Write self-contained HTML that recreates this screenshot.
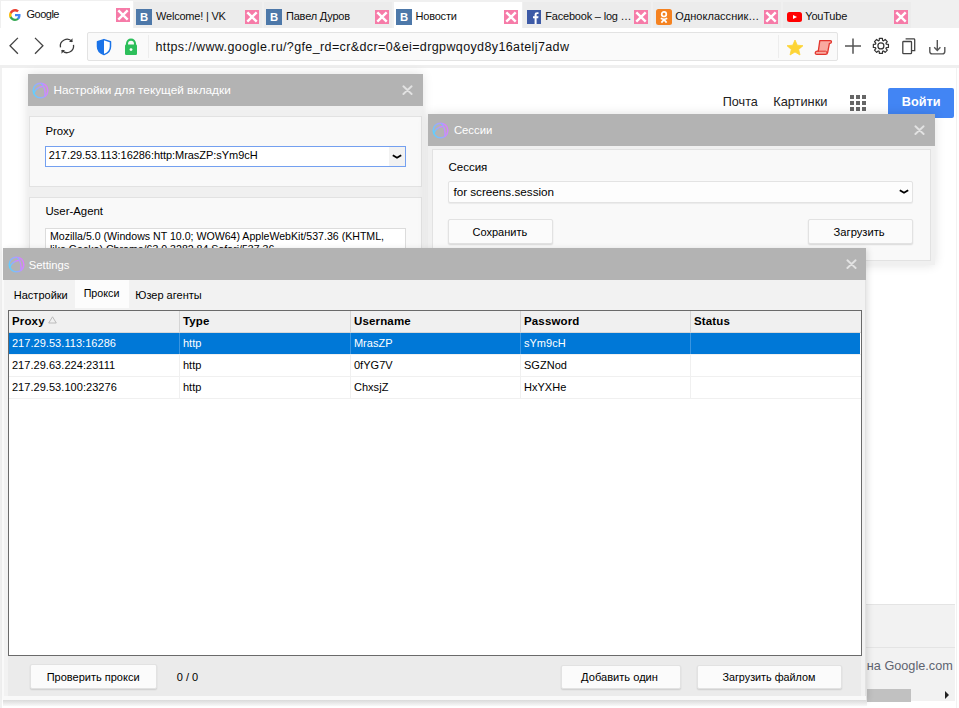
<!DOCTYPE html><html><head><meta charset="utf-8"><style>
*{box-sizing:border-box;margin:0;padding:0}
html,body{width:959px;height:708px;overflow:hidden;background:#fff;font-family:"Liberation Sans",sans-serif;position:relative}
.a{position:absolute}
svg{display:block}
.t{white-space:nowrap;line-height:1}
.tab{top:3px;height:26px}
.fav{top:9px;width:16px;height:16px}
.ttl{top:12px;font-size:12px;color:#1a1a1a}
.cls{top:10px;width:14px;height:14px}
.tbar{background:#b3b3b3;color:#fff;font-size:13px}
.panel{background:#f9f9f9;border:1px solid #e2e2e2}
.lbl{font-size:12.5px;color:#111}
.btn{background:#fbfbfb;border:1px solid #e2e2e2;border-radius:2px;box-shadow:0 1px 1.5px rgba(0,0,0,.13);font-size:12px;color:#111;text-align:center}
.cell{font-size:11px;color:#000}
</style></head><body>
<div class="a" style="left:0;top:0;width:959px;height:28px;background:#f0f0f0"></div>
<div class="a" style="left:1px;top:1px;width:132px;height:27px;background:#fff"></div>
<svg class="a" style="left:9px;top:9px" width="12" height="12" viewBox="0 0 16 16"><path d="M15.4 8.2c0-.6-.1-1.1-.2-1.6H8v3h4.2c-.2 1-.7 1.8-1.5 2.3v1.9h2.5c1.4-1.3 2.2-3.3 2.2-5.6z" fill="#4285f4"/><path d="M8 16c2.1 0 3.9-.7 5.2-1.9l-2.5-1.9c-.7.5-1.6.8-2.7.8-2 0-3.8-1.4-4.4-3.3H1v2C2.3 14.3 4.9 16 8 16z" fill="#34a853"/><path d="M3.6 9.7c-.2-.5-.3-1.1-.3-1.7s.1-1.2.3-1.7v-2H1C.4 5.4 0 6.7 0 8s.4 2.6 1 3.7l2.6-2z" fill="#fbbc05"/><path d="M8 3.2c1.2 0 2.2.4 3 1.2l2.3-2.3C11.9.8 10.1 0 8 0 4.9 0 2.3 1.7 1 4.3l2.6 2C4.2 4.5 6 3.2 8 3.2z" fill="#ea4335"/></svg>
<div class="a t" style="left:26.5px;top:9.29px;font-size:11px;color:#111;letter-spacing:-.5px">Google</div>
<div class="a" style="left:116px;top:8px"><svg width="14" height="14"><rect width="14" height="14" fill="#f67ba8"/><path d="M2.3 2.3L11.7 11.7M11.7 2.3L2.3 11.7" stroke="#fff" stroke-width="2.4"/></svg></div>
<div class="a" style="left:134px;top:2px;width:128px;height:26px;background:#ececec"></div>
<svg class="a" style="left:136px;top:9px" width="16" height="16"><rect width="16" height="16" fill="#4d78a9"/><text x="8.2" y="11.9" font-family="Liberation Sans" font-weight="bold" font-size="11.3" fill="#fff" text-anchor="middle">B</text></svg>
<div class="a t" style="left:156px;top:11.09px;font-size:11px;color:#111;letter-spacing:-.2px">Welcome! | VK</div>
<div class="a" style="left:244.5px;top:10px"><svg width="14" height="14"><rect width="14" height="14" fill="#f67ba8"/><path d="M2.3 2.3L11.7 11.7M11.7 2.3L2.3 11.7" stroke="#fff" stroke-width="2.4"/></svg></div>
<div class="a" style="left:264px;top:2px;width:128px;height:26px;background:#ececec"></div>
<svg class="a" style="left:266px;top:9px" width="16" height="16"><rect width="16" height="16" fill="#4d78a9"/><text x="8.2" y="11.9" font-family="Liberation Sans" font-weight="bold" font-size="11.3" fill="#fff" text-anchor="middle">B</text></svg>
<div class="a t" style="left:286px;top:11.09px;font-size:11px;color:#111;letter-spacing:-.2px">Павел Дуров</div>
<div class="a" style="left:374.5px;top:10px"><svg width="14" height="14"><rect width="14" height="14" fill="#f67ba8"/><path d="M2.3 2.3L11.7 11.7M11.7 2.3L2.3 11.7" stroke="#fff" stroke-width="2.4"/></svg></div>
<div class="a" style="left:393.5px;top:2px;width:128px;height:26px;background:#fff"></div>
<svg class="a" style="left:395.5px;top:9px" width="16" height="16"><rect width="16" height="16" fill="#4d78a9"/><text x="8.2" y="11.9" font-family="Liberation Sans" font-weight="bold" font-size="11.3" fill="#fff" text-anchor="middle">B</text></svg>
<div class="a t" style="left:415.5px;top:11.09px;font-size:11px;color:#111;letter-spacing:-.2px">Новости</div>
<div class="a" style="left:504.0px;top:10px"><svg width="14" height="14"><rect width="14" height="14" fill="#f67ba8"/><path d="M2.3 2.3L11.7 11.7M11.7 2.3L2.3 11.7" stroke="#fff" stroke-width="2.4"/></svg></div>
<div class="a" style="left:523.3px;top:2px;width:128px;height:26px;background:#ececec"></div>
<svg class="a" style="left:527.0px;top:10px" width="14" height="14"><rect width="14" height="14" fill="#3d5aa6"/><path d="M7.6 14V8.2H6V6.2H7.6V4.7C7.6 3 8.6 2.2 10.1 2.2C10.8 2.2 11.3 2.3 11.5 2.3V4H10.5C9.7 4 9.6 4.4 9.6 4.9V6.2H11.5L11.2 8.2H9.6V14Z" fill="#fff"/></svg>
<div class="a t" style="left:545.3px;top:11.09px;font-size:11px;color:#111;letter-spacing:-.2px">Facebook – log …</div>
<div class="a" style="left:633.8px;top:10px"><svg width="14" height="14"><rect width="14" height="14" fill="#f67ba8"/><path d="M2.3 2.3L11.7 11.7M11.7 2.3L2.3 11.7" stroke="#fff" stroke-width="2.4"/></svg></div>
<div class="a" style="left:653.3px;top:2px;width:128px;height:26px;background:#ececec"></div>
<svg class="a" style="left:656.3px;top:9px" width="16" height="16"><rect width="16" height="16" rx="2.5" fill="#f58220"/><circle cx="8" cy="5.2" r="2.3" fill="none" stroke="#fff" stroke-width="1.7"/><path d="M4.8 9.3q3.2 2 6.4 0M8 10.6l-2.6 3M8 10.6l2.6 3" fill="none" stroke="#fff" stroke-width="1.7"/></svg>
<div class="a t" style="left:675.3px;top:11.09px;font-size:11px;color:#111;letter-spacing:.05px">Одноклассник…</div>
<div class="a" style="left:763.8px;top:10px"><svg width="14" height="14"><rect width="14" height="14" fill="#f67ba8"/><path d="M2.3 2.3L11.7 11.7M11.7 2.3L2.3 11.7" stroke="#fff" stroke-width="2.4"/></svg></div>
<div class="a" style="left:783.3px;top:2px;width:128px;height:26px;background:#ececec"></div>
<svg class="a" style="left:787.3px;top:12px" width="15" height="10"><rect width="15" height="10" rx="2.5" fill="#f00"/><path d="M6 3l4 2-4 2z" fill="#fff"/></svg>
<div class="a t" style="left:805.3px;top:11.09px;font-size:11px;color:#111;letter-spacing:-.2px">YouTube</div>
<div class="a" style="left:893.8px;top:10px"><svg width="14" height="14"><rect width="14" height="14" fill="#f67ba8"/><path d="M2.3 2.3L11.7 11.7M11.7 2.3L2.3 11.7" stroke="#fff" stroke-width="2.4"/></svg></div>
<div class="a" style="left:0;top:28px;width:959px;height:37px;background:#fff"></div>
<div class="a" style="left:0;top:65px;width:959px;height:3px;background:#efefef"></div>
<svg class="a" style="left:0;top:30px" width="80" height="30"><path d="M17.9 7.9L10 15.8L17.9 23.75M35 7.9L42.9 15.8L35 23.75" fill="none" stroke="#444" stroke-width="1.3"/><g transform="translate(56,6)"><path d="M4.5 11.3A6.6 6.6 0 0 1 16.1 5.8M17.5 8.9A6.6 6.6 0 0 1 5.9 14.2" fill="none" stroke="#3a3a3a" stroke-width="1.3"/><path d="M13 5.9H16.5V2.3Z" fill="#3a3a3a"/><path d="M9 14.1H5.5V17.7Z" fill="#3a3a3a"/></g></svg>
<div class="a" style="left:87px;top:32px;width:751px;height:29px;background:#fafafa;border:1px solid #e3e3e3;border-radius:2px"></div>
<div class="a" style="left:148px;top:35px;width:1px;height:23px;background:#ededed"></div>
<div class="a" style="left:778px;top:35px;width:1px;height:23px;background:#ededed"></div>
<svg class="a" style="left:90px;top:30px" width="60" height="30"><path d="M14 9.6L20.5 11.8V16.5C20.5 20.3 17.8 23.3 14 24.6C10.2 23.3 7.5 20.3 7.5 16.5V11.8Z" fill="#fff" stroke="#1a73e8" stroke-width="1.5" stroke-linejoin="round"/><path d="M14 9.6L7.5 11.8V16.5C7.5 20.3 10.2 23.3 14 24.6Z" fill="#1a73e8"/><path d="M37 15V13.6A4 4 0 0 1 45 13.6V15" fill="none" stroke="#2dbf5b" stroke-width="2.1"/><rect x="35" y="14.6" width="12" height="10.3" rx="1.2" fill="#2dbf5b"/><circle cx="41" cy="19.6" r="1.4" fill="#fff"/></svg>
<div class="a t" style="left:155.5px;top:41.4px;font-size:12.5px;letter-spacing:.38px;color:#111">https://www.google.ru/?gfe_rd=cr&amp;dcr=0&amp;ei=drgpwqoyd8y16atelj7adw</div>
<svg class="a" style="left:780px;top:30px" width="179" height="32"><path d="M15 10L17.3 15.2L23 15.7L18.7 19.4L20 25L15 22L10 25L11.3 19.4L7 15.7L12.7 15.2Z" fill="#fdd435" stroke="#fdd435" stroke-width=".8" stroke-linejoin="round"/><path d="M39.8 10.6H50.2Q51.6 10.6 51.4 12.1Q51.2 13.3 50 13.3H49.4L47.7 22.3Q47.3 24.3 45.5 24.3H36.8Q35 24.3 35.3 22.7Q35.6 21.2 37.3 21.2H38.3Z" fill="#f9a99f" stroke="#e2352d" stroke-width="1.3" stroke-linejoin="round"/><path d="M37.3 21.2H45.6Q47 21.2 46.7 22.8" fill="none" stroke="#e2352d" stroke-width="1"/><path d="M73 8.4V23.7M65 15.9H81" stroke="#555" stroke-width="1.5"/><path d="M98.72 10.63 L99.22 10.45 L99.37 8.35 L102.43 8.35 L102.58 10.45 L103.08 10.63 L103.56 10.86 L105.15 9.48 L107.32 11.65 L105.94 13.24 L106.17 13.72 L106.35 14.22 L108.45 14.37 L108.45 17.43 L106.35 17.58 L106.17 18.08 L105.94 18.56 L107.32 20.15 L105.15 22.32 L103.56 20.94 L103.08 21.17 L102.58 21.35 L102.43 23.45 L99.37 23.45 L99.22 21.35 L98.72 21.17 L98.24 20.94 L96.65 22.32 L94.48 20.15 L95.86 18.56 L95.63 18.08 L95.45 17.58 L93.35 17.43 L93.35 14.37 L95.45 14.22 L95.63 13.72 L95.86 13.24 L94.48 11.65 L96.65 9.48 L98.24 10.86Z" fill="none" stroke="#333" stroke-width="1.2" stroke-linejoin="round"/><circle cx="100.9" cy="15.9" r="3" fill="none" stroke="#333" stroke-width="1.2"/><rect x="122.8" y="11.5" width="8.7" height="12.2" rx="0.8" fill="none" stroke="#444" stroke-width="1.3"/><path d="M125.6 8.9H133.9Q134.7 8.9 134.7 9.7V20.6H132" fill="none" stroke="#444" stroke-width="1.3"/><path d="M149.8 17.1V21.5Q149.8 23.9 152.2 23.9H162.4Q164.8 23.9 164.8 21.5V17.1" fill="none" stroke="#555" stroke-width="1.4"/><path d="M157.3 10V20.2M154.2 17.3L157.3 20.4L160.4 17.3" fill="none" stroke="#555" stroke-width="1.4"/></svg>
<div class="a" style="left:0;top:68px;width:2px;height:640px;background:#f1f1f1"></div>
<div class="a t" style="left:722.8px;top:95.93px;font-size:12.6px;color:#222">Почта</div>
<div class="a t" style="left:773.2px;top:95.76px;font-size:12.8px;color:#222">Картинки</div>
<svg class="a" style="left:850px;top:95px" width="16" height="16"><rect x="0" y="0" width="4" height="4" fill="#666"/><rect x="6" y="0" width="4" height="4" fill="#666"/><rect x="12" y="0" width="4" height="4" fill="#666"/><rect x="0" y="6" width="4" height="4" fill="#666"/><rect x="6" y="6" width="4" height="4" fill="#666"/><rect x="12" y="6" width="4" height="4" fill="#666"/><rect x="0" y="12" width="4" height="4" fill="#666"/><rect x="6" y="12" width="4" height="4" fill="#666"/><rect x="12" y="12" width="4" height="4" fill="#666"/></svg>
<div class="a" style="left:888px;top:88px;width:66px;height:30px;background:#4285f4;border-radius:2px"></div>
<div class="a t" style="left:901.8px;top:95.65px;font-size:12.7px;color:#fff;font-weight:bold">Войти</div>
<div class="a" style="left:956px;top:68px;width:1px;height:640px;background:#f2f2f2"></div>
<div class="a" style="left:866px;top:604px;width:89px;height:97px;background:#f2f2f2;border-top:1px solid #e4e4e4"></div>
<div class="a" style="left:866px;top:647px;width:89px;height:1px;background:#e4e4e4"></div>
<div class="a t" style="left:866.8px;top:660.05px;font-size:12.7px;color:#5e6470">на Google.com</div>
<div class="a" style="left:867px;top:689px;width:44px;height:13px;background:#c1c1c1"></div>
<svg class="a" style="left:943px;top:690px" width="8" height="10"><path d="M2 1L6 5L2 9Z" fill="#222"/></svg>
<div class="a" style="left:28px;top:74px;width:395px;height:180px;background:#f0f0f0;box-shadow:0 0 10px rgba(0,0,0,.12)"></div>
<div class="a tbar" style="left:28px;top:74px;width:395px;height:32px"></div>
<div class="a" style="left:32px;top:81.5px"><svg width="17" height="17" viewBox="0 0 17 17"><defs><linearGradient id="g1" x1="0" y1="0.7" x2="1" y2="0.3"><stop offset="0" stop-color="#5fd0ff"/><stop offset="1" stop-color="#e07bff"/></linearGradient></defs><g fill="none" stroke="url(#g1)" stroke-width="1.5"><circle cx="8.5" cy="8.5" r="7.3"/><path d="M1.8 11Q4 5.5 11 4.2"/><path d="M9.5 1.4Q14.2 7 12.8 15"/></g></svg></div>
<div class="a t" style="left:53.5px;top:85.01px;font-size:11.8px;color:#fff">Настройки для текущей вкладки</div>
<div class="a" style="left:401.5px;top:85px"><svg width="11" height="10"><path d="M1.4 1.3L9.6 9M9.6 1.3L1.4 9" stroke="#e2e2e2" stroke-width="1.9" stroke-linecap="round"/></svg></div>
<div class="a panel" style="left:29px;top:116px;width:393px;height:71px"></div>
<div class="a t" style="left:45.4px;top:126.15px;font-size:11.4px;color:#000">Proxy</div>
<div class="a" style="left:45px;top:146px;width:361px;height:21px;background:#fff;border:1px solid #74a0f0"></div>
<div class="a" style="left:388.5px;top:147px;width:16.5px;height:19px;background:#f2f2f2"></div>
<div class="a" style="left:392px;top:153.5px"><svg width="10" height="5"><path d="M0.8 1.2L5 3.7L9.2 1.2" fill="none" stroke="#000" stroke-width="1.9"/></svg></div>
<div class="a t" style="left:48.7px;top:150.29px;font-size:11px;color:#000;letter-spacing:-.05px">217.29.53.113:16286:http:MrasZP:sYm9cH</div>
<div class="a panel" style="left:29px;top:197px;width:393px;height:70px"></div>
<div class="a t" style="left:45.4px;top:205.65px;font-size:11.4px;color:#000">User-Agent</div>
<div class="a" style="left:45px;top:228px;width:361px;height:30px;background:#fff;border:1px solid #dcdcdc"></div>
<div class="a" style="left:50px;top:229.5px;width:352px;font-size:10.6px;line-height:13px;color:#000;white-space:nowrap">Mozilla/5.0 (Windows NT 10.0; WOW64) AppleWebKit/537.36 (KHTML,<br>like Gecko) Chrome/63.0.3282.84 Safari/537.36</div>
<div class="a" style="left:428px;top:114px;width:507px;height:151px;background:#f0f0f0;box-shadow:0 0 10px rgba(0,0,0,.12)"></div>
<div class="a tbar" style="left:428px;top:114px;width:507px;height:32px"></div>
<div class="a" style="left:432px;top:121.5px"><svg width="17" height="17" viewBox="0 0 17 17"><defs><linearGradient id="g2" x1="0" y1="0.7" x2="1" y2="0.3"><stop offset="0" stop-color="#5fd0ff"/><stop offset="1" stop-color="#e07bff"/></linearGradient></defs><g fill="none" stroke="url(#g2)" stroke-width="1.5"><circle cx="8.5" cy="8.5" r="7.3"/><path d="M1.8 11Q4 5.5 11 4.2"/><path d="M9.5 1.4Q14.2 7 12.8 15"/></g></svg></div>
<div class="a t" style="left:453.9px;top:125.13px;font-size:11.3px;color:#fff">Сессии</div>
<div class="a" style="left:913.5px;top:124.5px"><svg width="11" height="10"><path d="M1.4 1.3L9.6 9M9.6 1.3L1.4 9" stroke="#e2e2e2" stroke-width="1.9" stroke-linecap="round"/></svg></div>
<div class="a panel" style="left:432px;top:149px;width:499px;height:112px"></div>
<div class="a t" style="left:448.5px;top:161.87px;font-size:11.5px;color:#000">Сессия</div>
<div class="a" style="left:448px;top:181px;width:465px;height:22px;background:#fdfdfd;border:1px solid #e3e3e3;border-radius:2px;box-shadow:0 1px 1px rgba(0,0,0,.06)"></div>
<div class="a t" style="left:453.4px;top:185.70px;font-size:11.7px;color:#000">for screens.session</div>
<div class="a" style="left:899px;top:189px"><svg width="10" height="5"><path d="M0.8 1.2L5 3.7L9.2 1.2" fill="none" stroke="#000" stroke-width="1.9"/></svg></div>
<div class="a btn" style="left:448px;top:219px;width:105px;height:24.5px"></div>
<div class="a t" style="left:472.5px;top:226.99px;font-size:11px;color:#000">Сохранить</div>
<div class="a btn" style="left:808px;top:219px;width:105px;height:24.5px"></div>
<div class="a t" style="left:833.6px;top:226.62px;font-size:11.2px;color:#000">Загрузить</div>
<div class="a" style="left:3px;top:248px;width:863px;height:452px;background:#f9f9f9;box-shadow:2px 1px 6px rgba(0,0,0,.12)"></div>
<div class="a" style="left:4px;top:280px;width:862px;height:416px;background:#f2f2f2;border-right:1px solid #e2e2e2"></div>
<div class="a" style="left:8px;top:656px;width:853px;height:40px;background:#ebebeb"></div>
<div class="a" style="left:3px;top:700px;width:864px;height:6px;background:linear-gradient(#dadada,#ececec 60%,#f8f8f8)"></div>
<div class="a tbar" style="left:3px;top:248px;width:863px;height:32px"></div>
<div class="a" style="left:7.5px;top:255.5px"><svg width="17" height="17" viewBox="0 0 17 17"><defs><linearGradient id="g3" x1="0" y1="0.7" x2="1" y2="0.3"><stop offset="0" stop-color="#5fd0ff"/><stop offset="1" stop-color="#e07bff"/></linearGradient></defs><g fill="none" stroke="url(#g3)" stroke-width="1.5"><circle cx="8.5" cy="8.5" r="7.3"/><path d="M1.8 11Q4 5.5 11 4.2"/><path d="M9.5 1.4Q14.2 7 12.8 15"/></g></svg></div>
<div class="a t" style="left:28.7px;top:259.93px;font-size:11.3px;color:#fff">Settings</div>
<div class="a" style="left:845.5px;top:258.5px"><svg width="11" height="10"><path d="M1.4 1.3L9.6 9M9.6 1.3L1.4 9" stroke="#e2e2e2" stroke-width="1.9" stroke-linecap="round"/></svg></div>
<div class="a" style="left:75px;top:280px;width:54px;height:28px;background:#fcfcfc"></div>
<div class="a t" style="left:13.8px;top:289.99px;font-size:11px;color:#000">Настройки</div>
<div class="a t" style="left:83.7px;top:287.94px;font-size:10.7px;color:#000">Прокси</div>
<div class="a t" style="left:135.3px;top:289.99px;font-size:11px;color:#000">Юзер агенты</div>
<div class="a" style="left:8px;top:310px;width:854px;height:346px;background:#fff;border:1px solid #6a6a6a"></div>
<div class="a" style="left:9px;top:311px;width:852px;height:22px;background:#f0f0f0;border-bottom:1px solid #d8d8d8"></div>
<div class="a t" style="left:12.0px;top:315.87px;font-size:11.5px;font-weight:bold;color:#000;letter-spacing:.15px">Proxy</div>
<div class="a" style="left:179px;top:311px;width:1px;height:21px;background:#d5d5d5"></div>
<div class="a" style="left:179px;top:333px;width:1px;height:66px;background:#f0f0f0"></div>
<div class="a t" style="left:183.0px;top:315.87px;font-size:11.5px;font-weight:bold;color:#000;letter-spacing:.15px">Type</div>
<div class="a" style="left:350px;top:311px;width:1px;height:21px;background:#d5d5d5"></div>
<div class="a" style="left:350px;top:333px;width:1px;height:66px;background:#f0f0f0"></div>
<div class="a t" style="left:354.0px;top:315.87px;font-size:11.5px;font-weight:bold;color:#000;letter-spacing:.15px">Username</div>
<div class="a" style="left:520px;top:311px;width:1px;height:21px;background:#d5d5d5"></div>
<div class="a" style="left:520px;top:333px;width:1px;height:66px;background:#f0f0f0"></div>
<div class="a t" style="left:524.0px;top:315.87px;font-size:11.5px;font-weight:bold;color:#000;letter-spacing:.15px">Password</div>
<div class="a" style="left:690px;top:311px;width:1px;height:21px;background:#d5d5d5"></div>
<div class="a" style="left:690px;top:333px;width:1px;height:66px;background:#f0f0f0"></div>
<div class="a t" style="left:694.0px;top:315.87px;font-size:11.5px;font-weight:bold;color:#000;letter-spacing:.15px">Status</div>
<svg class="a" style="left:47.5px;top:315.5px" width="9" height="8"><path d="M0.7 7L4.5 0.8L8.3 7Z" fill="none" stroke="#b4b4b4" stroke-width="0.9"/></svg>
<div class="a" style="left:9px;top:354px;width:852px;height:1px;background:#f0f0f0"></div>
<div class="a" style="left:9px;top:333px;width:851px;height:21px;background:#0078d7"></div>
<div class="a" style="left:179px;top:333px;width:1px;height:21px;background:#3a95e0"></div>
<div class="a" style="left:350px;top:333px;width:1px;height:21px;background:#3a95e0"></div>
<div class="a" style="left:520px;top:333px;width:1px;height:21px;background:#3a95e0"></div>
<div class="a" style="left:690px;top:333px;width:1px;height:21px;background:#3a95e0"></div>
<div class="a t" style="left:11.9px;top:337.89px;font-size:11px;color:#fff;letter-spacing:.05px">217.29.53.113:16286</div>
<div class="a t" style="left:182.9px;top:337.89px;font-size:11px;color:#fff;letter-spacing:.05px">http</div>
<div class="a t" style="left:353.9px;top:337.89px;font-size:11px;color:#fff;letter-spacing:.05px">MrasZP</div>
<div class="a t" style="left:523.9px;top:337.89px;font-size:11px;color:#fff;letter-spacing:.05px">sYm9cH</div>
<div class="a" style="left:9px;top:376px;width:852px;height:1px;background:#f0f0f0"></div>
<div class="a t" style="left:11.9px;top:359.89px;font-size:11px;color:#000;letter-spacing:.05px">217.29.63.224:23111</div>
<div class="a t" style="left:182.9px;top:359.89px;font-size:11px;color:#000;letter-spacing:.05px">http</div>
<div class="a t" style="left:353.9px;top:359.89px;font-size:11px;color:#000;letter-spacing:.05px">0fYG7V</div>
<div class="a t" style="left:523.9px;top:359.89px;font-size:11px;color:#000;letter-spacing:.05px">SGZNod</div>
<div class="a" style="left:9px;top:398px;width:852px;height:1px;background:#f0f0f0"></div>
<div class="a t" style="left:11.9px;top:381.89px;font-size:11px;color:#000;letter-spacing:.05px">217.29.53.100:23276</div>
<div class="a t" style="left:182.9px;top:381.89px;font-size:11px;color:#000;letter-spacing:.05px">http</div>
<div class="a t" style="left:353.9px;top:381.89px;font-size:11px;color:#000;letter-spacing:.05px">ChxsjZ</div>
<div class="a t" style="left:523.9px;top:381.89px;font-size:11px;color:#000;letter-spacing:.05px">HxYXHe</div>
<div class="a btn" style="left:30px;top:664px;width:127px;height:24.5px"></div>
<div class="a t" style="left:46.7px;top:671.79px;font-size:11px;color:#000">Проверить прокси</div>
<div class="a t" style="left:176.8px;top:671.79px;font-size:11px;color:#000">0 / 0</div>
<div class="a btn" style="left:561px;top:665px;width:119.5px;height:23.5px"></div>
<div class="a t" style="left:581.1px;top:671.90px;font-size:11.1px;color:#000">Добавить один</div>
<div class="a btn" style="left:697px;top:665px;width:144.5px;height:23.5px"></div>
<div class="a t" style="left:722.4px;top:672.16px;font-size:10.8px;color:#000">Загрузить файлом</div>
</body></html>
